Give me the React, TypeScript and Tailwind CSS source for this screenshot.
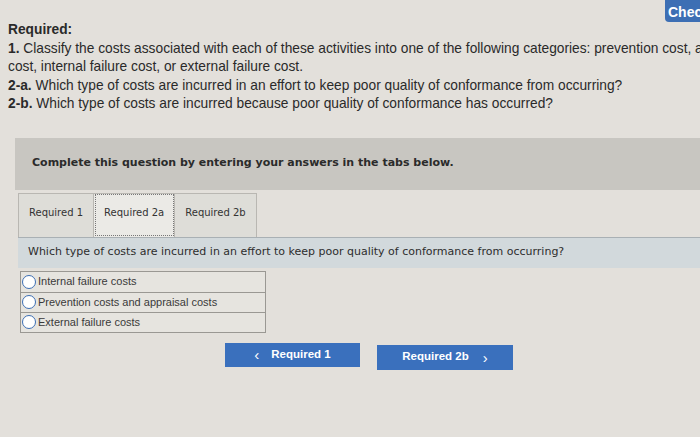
import React, { useState } from "react";

const options = [
  "Internal failure costs",
  "Prevention costs and appraisal costs",
  "External failure costs",
];

export default function App() {
  const [tab, setTab] = useState(1);
  const [choice, setChoice] = useState<number | null>(null);
  const tabs = ["Required 1", "Required 2a", "Required 2b"];

  return (
    <div className="w-[700px] h-[437px] overflow-hidden bg-[#e3e0db] relative" style={{ fontFamily: '"Liberation Sans", Arial, sans-serif' }}>
      {/* cut-off action button at the top right */}
      <div className="absolute left-[665px] top-0 h-[22px] w-[60px] bg-[#3d6fb4] rounded-bl-sm text-white text-[14px] font-bold pl-[3px] pt-[2px] whitespace-nowrap">
        Check
      </div>

      <div className="pt-[21px] pl-[8px] text-[13.75px] leading-[18.5px] text-[#2a2a2a] whitespace-nowrap overflow-hidden">
        <div className="font-bold">Required:</div>
        <div>
          <span className="font-bold">1.</span> Classify the costs associated with each of these activities into one of the following categories: prevention cost, appraisal
        </div>
        <div>cost, internal failure cost, or external failure cost.</div>
        <div>
          <span className="font-bold">2-a.</span> Which type of costs are incurred in an effort to keep poor quality of conformance from occurring?
        </div>
        <div>
          <span className="font-bold">2-b.</span> Which type of costs are incurred because poor quality of conformance has occurred?
        </div>
      </div>

      <div className="mt-[24px] ml-[15px] h-[52px] bg-[#c8c6c1] flex items-center pl-[17px]" style={{ fontFamily: '"DejaVu Sans", Verdana, sans-serif' }}>
        <span className="text-[11px] font-bold text-[#2b2b2b]">Complete this question by entering your answers in the tabs below.</span>
      </div>

      <div className="ml-[18px] mt-[3px]" style={{ fontFamily: '"DejaVu Sans", Verdana, sans-serif' }}>
        <div className="flex h-[44px]">
          {tabs.map((t, i) => (
            <button
              key={t}
              onClick={() => setTab(i)}
              className={
                "px-[10px] pb-[5px] text-[10px] text-[#333] border-t border-r border-[#b9b7b2] " +
                (i === 0 ? "border-l " : "") +
                (i === tab ? "bg-[#ebeae6] outline-1 outline-dotted outline-[#777] -outline-offset-2" : "bg-[#deddd8]")
              }
            >
              {t}
            </button>
          ))}
        </div>
        <div className="h-[31px] bg-[#d2d9dc] border-t border-[#a9b0b4] flex items-center pl-[10px]">
          <span className="text-[11px] text-[#2d2d2d]">Which type of costs are incurred in an effort to keep poor quality of conformance from occurring?</span>
        </div>
        <div className="mt-[3px] ml-[2px] w-[246px] border border-[#9a9893] bg-[#e6e4df]" style={{ fontFamily: '"Liberation Sans", Arial, sans-serif' }}>
          {options.map((o, i) => (
            <label
              key={o}
              className={"flex items-center h-[20px] gap-[2px] text-[11px] text-[#3a3a3a] cursor-pointer " + (i > 0 ? "border-t border-[#9a9893]" : "")}
            >
              <span className="w-[14px] h-[14px] rounded-full border-[1.5px] border-[#3d6fb4] bg-white ml-[1px] flex items-center justify-center">
                {choice === i && <span className="w-[6px] h-[6px] rounded-full bg-[#3d6fb4]" />}
              </span>
              <input type="radio" className="hidden" checked={choice === i} onChange={() => setChoice(i)} />
              {o}
            </label>
          ))}
        </div>
      </div>

      <div className="flex ml-[225px] mt-[10px] gap-[17px]">
        <button className="w-[135px] h-[24px] bg-[#3a70bd] text-white text-[11.5px] font-bold flex items-center justify-center gap-[12px]">
          <span className="text-[15px] font-normal leading-none">‹</span> Required 1
        </button>
        <button className="w-[136px] h-[25px] mt-[2px] bg-[#3a70bd] text-white text-[11.5px] font-bold flex items-center justify-center gap-[14px]">
          Required 2b <span className="text-[15px] font-normal leading-none">›</span>
        </button>
      </div>
    </div>
  );
}
